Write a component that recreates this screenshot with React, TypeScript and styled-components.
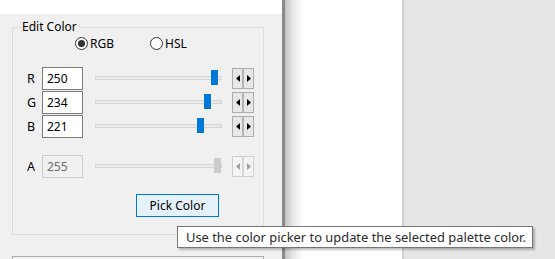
import React from "react";
import styled, { createGlobalStyle } from "styled-components";

const Global = createGlobalStyle`
  html, body { margin: 0; padding: 0; }
  body {
    width: 555px; height: 259px; overflow: hidden;
    font-family: "Noto Sans", "Liberation Sans", sans-serif;
    font-size: 12px; color: #000; background: #e6e6e6;
  }
  * { box-sizing: border-box; }
`;

const Page = styled.div`
  position: relative;
  display: flex;
  width: 555px;
  height: 259px;
  overflow: hidden;
`;

const LeftColumn = styled.div`
  width: 282px;
  display: flex;
  flex-direction: column;
  background: #f0f0f0;
  overflow: hidden;
`;

const TopStrip = styled.div`
  flex-shrink: 0;
  height: 14px;
  background: #ffffff;
`;

const Splitter = styled.div`
  width: 3px;
  background: #8a8a8a;
`;

const Canvas = styled.div`
  width: 119px;
  background: linear-gradient(to right, #c4c4c4 0px, #e8e8e8 8px, #fafafa 16px, #ffffff 20px);
  border-right: 2px solid #d2d2d2;
`;

const Gray = styled.div`
  flex: 1;
  background: #e6e6e6;
`;

const Group = styled.fieldset`
  flex-shrink: 0;
  margin: 7px 18px 0 12px;
  padding: 0;
  height: 214px;
  border: 1px solid #dcdcdc;
  min-width: 0;
`;

const Legend = styled.legend`
  margin-left: 8px;
  padding: 0 1px;
  line-height: 12px;
  font-size: 12px;
`;

const RadioRow = styled.div`
  display: flex;
  align-items: center;
  padding-left: 62px;
  height: 18px;
  margin-top: 1px;
`;

const RadioItem = styled.label<{ $gap?: number }>`
  display: flex;
  align-items: center;
  margin-right: ${(p) => p.$gap ?? 0}px;
`;

const RadioCircle = styled.span<{ $on?: boolean }>`
  width: 13px;
  height: 13px;
  border-radius: 50%;
  border: 1px solid #333333;
  background: #ffffff;
  display: flex;
  align-items: center;
  justify-content: center;
  margin-right: 2px;
  &::after {
    content: "";
    display: ${(p) => (p.$on ? "block" : "none")};
    width: 7px;
    height: 7px;
    border-radius: 50%;
    background: #333333;
  }
`;

const Rows = styled.div`
  display: flex;
  flex-direction: column;
  margin-top: 14px;
`;

const Row = styled.div<{ $mt?: number }>`
  display: flex;
  align-items: center;
  height: 24px;
  margin-top: ${(p) => p.$mt ?? 0}px;
  padding-left: 14px;
`;

const ChLabel = styled.span`
  width: 15px;
  font-size: 12.5px;
`;

const Box = styled.div<{ $dis?: boolean }>`
  width: 41px;
  height: 23px;
  border: 1px solid ${(p) => (p.$dis ? "#cccccc" : "#7a7a7a")};
  background: ${(p) => (p.$dis ? "#f0f0f0" : "#ffffff")};
  color: ${(p) => (p.$dis ? "#6d6d6d" : "#000000")};
  padding: 2px 0 0 4px;
  line-height: 17px;
`;

const Slider = styled.div`
  position: relative;
  width: 127px;
  height: 24px;
  margin-left: 12px;
  display: flex;
  align-items: center;
`;

const Track = styled.div`
  width: 100%;
  height: 4px;
  background: #e7eaea;
  border: 1px solid #d6d6d6;
`;

const Thumb = styled.div<{ $dis?: boolean }>`
  position: absolute;
  top: 4px;
  width: 7px;
  height: 15px;
  background: ${(p) => (p.$dis ? "#cccccc" : "#0078d7")};
`;

const Spin = styled.div<{ $dis?: boolean }>`
  display: flex;
  margin-left: 10px;
  width: 22px;
  height: 21px;
  border: 1px solid ${(p) => (p.$dis ? "#cfcfcf" : "#adadad")};
  background: ${(p) => (p.$dis ? "#f4f4f4" : "#e8e8e8")};
`;

const SpinHalf = styled.div<{ $dis?: boolean; $right?: boolean }>`
  flex: 1;
  display: flex;
  align-items: center;
  justify-content: center;
  border-left: ${(p) => (p.$right ? `2px solid ${p.$dis ? "#d6d6d6" : "#b4b4b4"}` : "none")};
  color: ${(p) => (p.$dis ? "#a0a0a0" : "#000000")};
`;

const ButtonRow = styled.div`
  display: flex;
  padding-left: 123px;
  margin-top: 16px;
`;

const Button = styled.button`
  width: 83px;
  height: 23px;
  border: 1px solid #0078d7;
  background: #e5f1fb;
  font-family: inherit;
  font-size: 12px;
  color: #000;
  padding: 0;
`;

const NextBox = styled.div`
  flex-shrink: 0;
  margin: 21px 18px 0 12px;
  height: 10px;
  border: 1px solid #adadad;
  background: #f0f0f0;
`;

const Tooltip = styled.div`
  position: absolute;
  left: 177px;
  top: 226px;
  height: 22px;
  padding: 0 6px 0 8px;
  border: 1px solid #767676;
  background: #ffffff;
  color: #2b2b2b;
  font-size: 12.9px;
  line-height: 20px;
  white-space: nowrap;
  box-shadow: 2px 2px 2px rgba(0, 0, 0, 0.25);
`;

const Arrow = ({ dir }: { dir: "l" | "r" }) => (
  <svg width="4" height="7" viewBox="0 0 4 7">
    {dir === "l" ? <polygon points="4,0 4,7 0,3.5" fill="currentColor" /> : <polygon points="0,0 0,7 4,3.5" fill="currentColor" />}
  </svg>
);

type Ch = { name: string; value: number; pos: number; dis?: boolean; mt?: number };
const channels: Ch[] = [
  { name: "R", value: 250, pos: 116 },
  { name: "G", value: 234, pos: 109 },
  { name: "B", value: 221, pos: 102 },
  { name: "A", value: 255, pos: 119, dis: true, mt: 16 },
];

export default function App() {
  return (
    <>
      <Global />
      <Page>
        <LeftColumn>
          <TopStrip />
          <Group>
            <Legend>Edit Color</Legend>
            <RadioRow>
              <RadioItem $gap={36}>
                <RadioCircle $on />
                RGB
              </RadioItem>
              <RadioItem>
                <RadioCircle />
                HSL
              </RadioItem>
            </RadioRow>
            <Rows>
              {channels.map((c) => (
                <Row key={c.name} $mt={c.mt}>
                  <ChLabel>{c.name}</ChLabel>
                  <Box $dis={c.dis}>{c.value}</Box>
                  <Slider>
                    <Track />
                    <Thumb $dis={c.dis} style={{ left: c.pos }} />
                  </Slider>
                  <Spin $dis={c.dis}>
                    <SpinHalf $dis={c.dis}>
                      <Arrow dir="l" />
                    </SpinHalf>
                    <SpinHalf $dis={c.dis} $right>
                      <Arrow dir="r" />
                    </SpinHalf>
                  </Spin>
                </Row>
              ))}
            </Rows>
            <ButtonRow>
              <Button>Pick Color</Button>
            </ButtonRow>
          </Group>
          <NextBox />
        </LeftColumn>
        <Splitter />
        <Canvas />
        <Gray />
        <Tooltip>Use the color picker to update the selected palette color.</Tooltip>
      </Page>
    </>
  );
}
